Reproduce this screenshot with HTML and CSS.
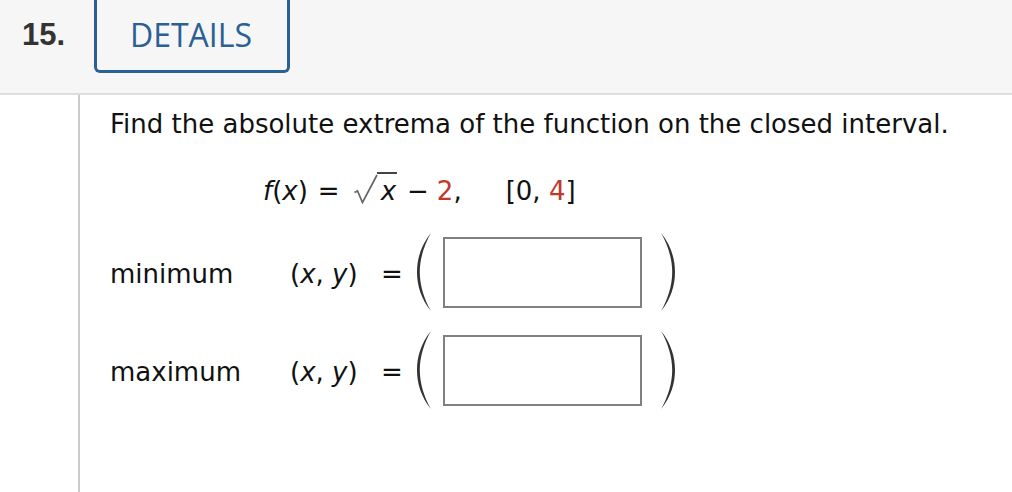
FILE: index.html
```html
<!DOCTYPE html>
<html>
<head>
<meta charset="utf-8">
<link rel="stylesheet" href="styles.css">
</head>
<body>
<div class="header">
  <span class="num">15.</span>
  <div class="details">DETAILS</div>
</div>
<div class="main">
  <p class="prompt">Find the absolute extrema of the function on the closed interval.</p>
  <div class="formula"><span class="it">f</span>(<span class="it">x</span>)<span class="g g10"></span>=<span class="g g14"></span><svg class="rad" width="24" height="30" viewBox="0 0 24 30"><path d="M0.5 18.5 L3.5 17 L8.5 28.5 L23 1" fill="none" stroke="#666" stroke-width="1.7" stroke-linejoin="miter"/></svg><span class="rad-body it">x</span><span class="g g10"></span>−<span class="g g8"></span><span class="red">2</span>,<span class="g g44"></span>[0, <span class="red">4</span>]</div>
  <div class="row">
    <span class="label">minimum</span>
    <span class="pair">(<span class="it">x</span>, <span class="it">y</span>)</span>
    <span class="eq">=</span>
    <svg class="paren" width="18" height="80" viewBox="0 0 18 80"><path d="M16 1 C6 13 2 27 2 40 C2 53 6 67 16 79 C9 67 4.8 53 4.8 40 C4.8 27 9 13 16 1 Z" fill="#333"/></svg>
    <div class="box"></div>
    <svg class="paren" width="18" height="80" viewBox="0 0 18 80"><path d="M2 1 C12 13 16 27 16 40 C16 53 12 67 2 79 C9 67 13.2 53 13.2 40 C13.2 27 9 13 2 1 Z" fill="#333"/></svg>
  </div>
  <div class="row">
    <span class="label">maximum</span>
    <span class="pair">(<span class="it">x</span>, <span class="it">y</span>)</span>
    <span class="eq">=</span>
    <svg class="paren" width="18" height="80" viewBox="0 0 18 80"><path d="M16 1 C6 13 2 27 2 40 C2 53 6 67 16 79 C9 67 4.8 53 4.8 40 C4.8 27 9 13 16 1 Z" fill="#333"/></svg>
    <div class="box"></div>
    <svg class="paren" width="18" height="80" viewBox="0 0 18 80"><path d="M2 1 C12 13 16 27 16 40 C16 53 12 67 2 79 C9 67 13.2 53 13.2 40 C13.2 27 9 13 2 1 Z" fill="#333"/></svg>
  </div>
</div>
</body>
</html>
```

FILE: styles.css
```css
html, body {
  margin: 0;
  padding: 0;
  background: #fff;
}
body {
  width: 1012px;
  height: 492px;
  overflow: hidden;
  font-family: "DejaVu Sans", Verdana, sans-serif;
  color: #111;
}
.header {
  height: 93px;
  background: #f6f6f6;
  border-bottom: 2px solid #dddddd;
  display: flex;
  align-items: flex-start;
}
.num {
  font-family: "Liberation Sans", Arial, sans-serif;
  font-weight: bold;
  font-size: 31px;
  color: #333;
  margin-left: 22px;
  margin-top: 16px;
  line-height: 38px;
  width: 72px;
}
.details {
  width: 196px;
  height: 73px;
  border: 3px solid #2b6095;
  border-top: 0;
  border-radius: 0 0 6px 6px;
  font-family: "Open Sans", sans-serif;
  font-size: 32px;
  color: #2b6095;
  display: flex;
  justify-content: center;
  align-items: flex-start;
  padding-top: 13px;
  padding-right: 2px;
  box-sizing: border-box;
  line-height: 44px;
}
.main {
  margin-left: 78px;
  border-left: 2px solid #cccccc;
  height: 397px;
  padding-left: 30px;
  box-sizing: border-box;
  font-size: 26px;
}
.prompt {
  margin: 0;
  padding-top: 13px;
  line-height: 32px;
}
.formula {
  margin-left: 153px;
  margin-top: 32px;
  height: 32px;
  line-height: 32px;
  white-space: nowrap;
}
.it { font-style: italic; }
.red { color: #c0392b; }
.g { display: inline-block; height: 1px; }
.g8 { width: 8px; }
.g10 { width: 10px; }
.g14 { width: 14px; }
.g44 { width: 44px; }
.rad {
  vertical-align: -4px;
  margin-right: -1px;
}
.rad-body {
  display: inline-block;
  line-height: 26px;
  padding: 4px 1px 0 4px;
  border-top: 2px solid #444;
}
.row {
  display: flex;
  align-items: center;
  height: 80px;
}
.formula + .row { margin-top: 28px; }
.row + .row { margin-top: 18px; }
.label { width: 180px; padding-top: 3px; }
.pair { width: 91px; padding-top: 3px; }
.eq { width: 34px; padding-top: 3px; }
.paren { display: block; }
.box {
  width: 199px;
  height: 71px;
  border: 2px solid #808080;
  box-sizing: border-box;
  margin-left: 10px;
  margin-right: 17px;
}
```
